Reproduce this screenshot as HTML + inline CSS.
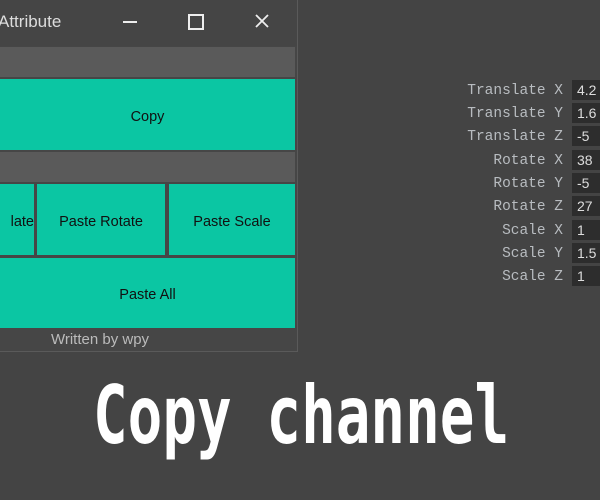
<!DOCTYPE html>
<html><head><style>
body{margin:0;width:600px;height:500px;background:#444;position:relative;overflow:hidden;font-family:"Liberation Sans","DejaVu Sans",sans-serif}
.a{position:absolute}
.win{left:0;top:0;width:297px;height:351px;background:#464646;border-right:1px solid #5a5a5a;border-bottom:1px solid #5a5a5a}
.title{left:0;top:0;width:297px;height:46px;background:#454545;color:#ddd;font-size:17px}
.bar{background:#5a5a5a;left:0;width:295px}
.btn{background:#0bc6a3;color:#111;font-size:14.5px;display:flex;align-items:center;justify-content:center}
.lbl{right:37px;width:160px;text-align:right;font-family:"Liberation Mono",monospace;font-size:14.5px;color:#b8bcc0}
.fld{left:572px;width:28px;height:20px;background:#2d2d2d;color:#ddd;font-size:14px;line-height:20px;padding-left:5px;box-sizing:border-box}
</style></head><body>
<div class="a win"></div>
<div class="a title"><span class="a" style="left:-2px;top:12px">Attribute</span>
<div class="a" style="left:123px;top:21px;width:14px;height:2px;background:#eee"></div>
<div class="a" style="left:188px;top:14px;width:12px;height:12px;border:2px solid #eee"></div>
<svg class="a" style="left:254px;top:13px" width="16" height="16"><path d="M2 2L14 14M14 2L2 14" stroke="#eee" stroke-width="1.8"/></svg>
</div>
<div class="a bar" style="top:47px;height:30px"></div>
<div class="a btn" style="left:0;top:79px;width:295px;height:71px;padding-top:4px;box-sizing:border-box">Copy</div>
<div class="a bar" style="top:152px;height:30px"></div>
<div class="a btn" style="left:0;top:184px;width:34px;height:71px;justify-content:flex-end;padding-top:4px;box-sizing:border-box">late</div>
<div class="a btn" style="left:37px;top:184px;width:128px;height:71px;padding-top:4px;box-sizing:border-box">Paste Rotate</div>
<div class="a btn" style="left:169px;top:184px;width:126px;height:71px;padding-top:4px;box-sizing:border-box">Paste Scale</div>
<div class="a btn" style="left:0;top:258px;width:295px;height:70px;padding-top:4px;box-sizing:border-box">Paste All</div>
<div class="a" style="left:0;width:200px;text-align:center;top:331px;color:#bbb;font-size:15px">Written by wpy</div>

<div class="a lbl" style="top:83px">Translate X</div><div class="a fld" style="top:80px">4.2</div>
<div class="a lbl" style="top:106px">Translate Y</div><div class="a fld" style="top:103px">1.6</div>
<div class="a lbl" style="top:129px">Translate Z</div><div class="a fld" style="top:126px">-5</div>
<div class="a lbl" style="top:153px">Rotate X</div><div class="a fld" style="top:150px">38</div>
<div class="a lbl" style="top:176px">Rotate Y</div><div class="a fld" style="top:173px">-5</div>
<div class="a lbl" style="top:199px">Rotate Z</div><div class="a fld" style="top:196px">27</div>
<div class="a lbl" style="top:223px">Scale X</div><div class="a fld" style="top:220px">1</div>
<div class="a lbl" style="top:246px">Scale Y</div><div class="a fld" style="top:243px">1.5</div>
<div class="a lbl" style="top:269px">Scale Z</div><div class="a fld" style="top:266px">1</div>

<div class="a" style="left:93px;top:369px;font-family:'DejaVu Sans Mono',monospace;font-weight:bold;font-size:80px;color:#fff;white-space:pre;transform:scaleX(0.72);transform-origin:0 0">Copy channel</div>
</body></html>
